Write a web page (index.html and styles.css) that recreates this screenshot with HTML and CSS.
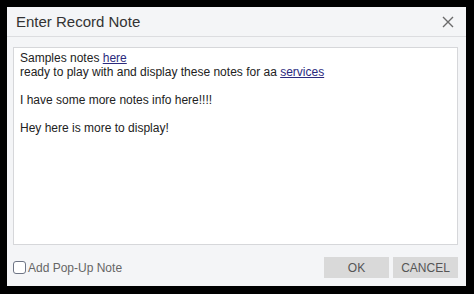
FILE: index.html
```html
<!DOCTYPE html>
<html lang="en">
  <head>
    <meta charset="UTF-8" />
    <title>Enter Record Note</title>
    <link rel="stylesheet" href="styles.css">
  </head>
  <body>
    <div class="dialog">
      <div class="dialog-header">
        <p class="dialog-title">Enter Record Note</p>
        <button class="close-button" title="Close">
          <svg width="12" height="12" viewBox="0 0 12 12">
            <path d="M1 1 L11 11 M11 1 L1 11" stroke="#6b6b6b" stroke-width="1.4" fill="none"/>
          </svg>
        </button>
      </div>

      <div class="dialog-body">
        <div class="note-box">
          <p>Samples notes <a href="#">here</a><br>ready to play with and display these notes for aa <a href="#">services</a></p>
          <p>I have some more notes info here!!!!</p>
          <p>Hey here is more to display!</p>
        </div>

        <div class="dialog-footer">
          <label class="popup-check">
            <input type="checkbox" class="popup-input">
            <span class="checkbox-box"></span>
            Add Pop-Up Note
          </label>
          <div class="footer-buttons">
            <button class="footer-button">OK</button>
            <button class="footer-button">CANCEL</button>
          </div>
        </div>
      </div>
    </div>
  </body>
</html>
```

FILE: styles.css
```css
body{
  margin: 0;
  background-color: black;
  padding: 7px 8px 8px 7px;
  font-family: "Liberation Sans", Arial, sans-serif;
}

.dialog{
  width: 459px;
  height: 279px;
  background-color: #f4f5f7;
  display: flex;
  flex-direction: column;
}

.dialog-header{
  height: 31px;
  border-bottom: 1px solid #dcdde0;
  display: flex;
  align-items: center;
  justify-content: space-between;
  padding: 0 12px 0 9px;
  box-sizing: border-box;
}

.dialog-title{
  margin: 0;
  font-size: 15px;
  color: #333;
}

.close-button{
  background: transparent;
  border: none;
  padding: 0;
  width: 12px;
  height: 12px;
  display: flex;
  cursor: pointer;
}

.dialog-body{
  flex: 1;
  display: flex;
  flex-direction: column;
  padding: 10px 8px 8px 6px;
}

.note-box{
  height: 198px;
  background-color: white;
  border: 1px solid #d6d7da;
  padding: 3px 6px;
  font-size: 12px;
  line-height: 14px;
  color: #222;
  box-sizing: border-box;
}

.note-box p{
  margin: 0 0 14px 0;
}

.note-box a{
  color: #2b2a7d;
}

.dialog-footer{
  margin-top: 12px;
  display: flex;
  align-items: center;
  justify-content: space-between;
}

.popup-check{
  display: flex;
  align-items: center;
  font-size: 12px;
  color: #666;
  cursor: pointer;
}

.popup-input{
  display: none;
}

.checkbox-box{
  width: 11px;
  height: 11px;
  border: 1.5px solid #6e7585;
  border-radius: 3px;
  background-color: white;
  margin-right: 2px;
}

.footer-buttons{
  display: flex;
  gap: 4px;
}

.footer-button{
  width: 65px;
  height: 21px;
  background-color: #d9d9d9;
  border: none;
  font-family: "Liberation Sans", Arial, sans-serif;
  font-size: 12px;
  color: #555;
  cursor: pointer;
}
```
